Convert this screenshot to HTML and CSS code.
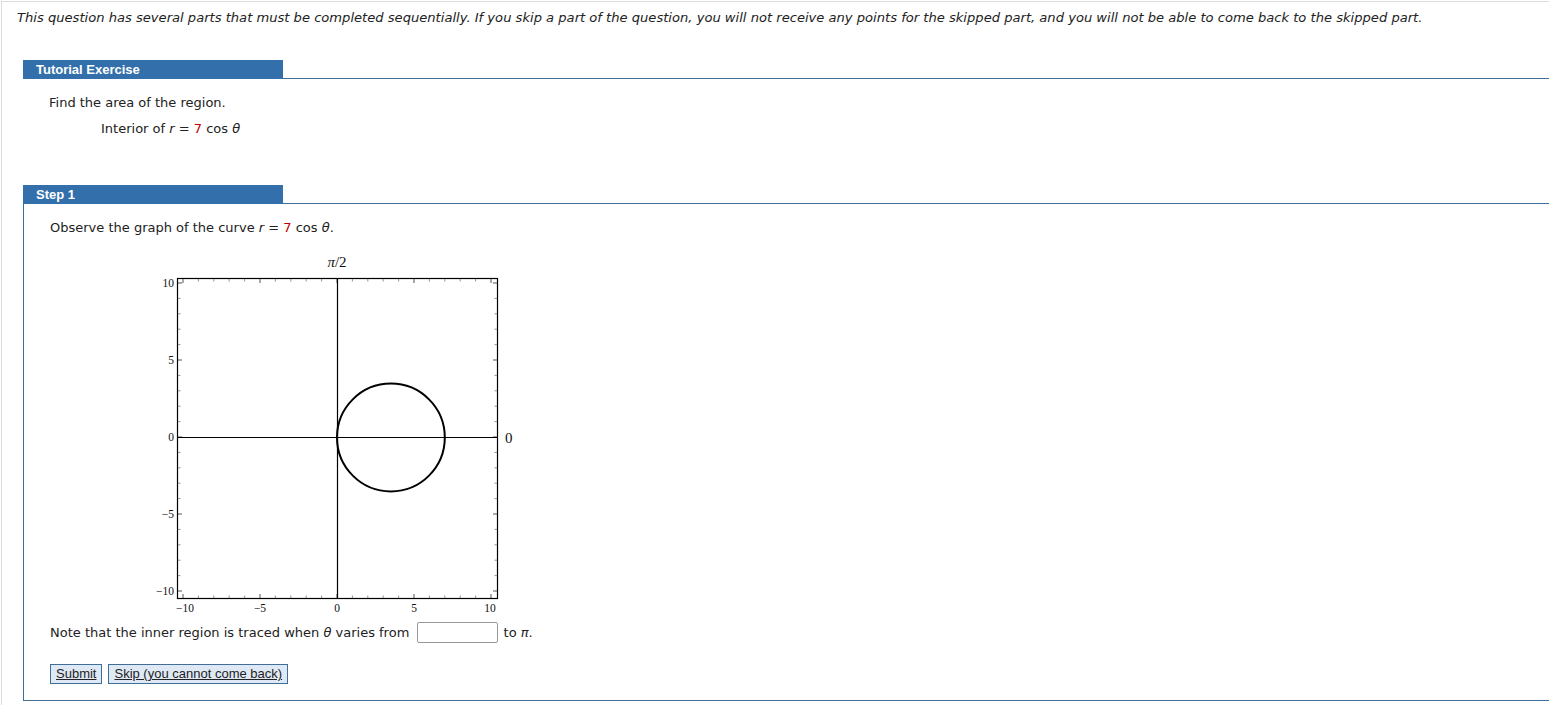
FILE: index.html
```html
<!DOCTYPE html>
<html>
<head>
<meta charset="utf-8">
<link rel="stylesheet" href="styles.css">
</head>
<body>
<div class="page">
  <p class="notice">This question has several parts that must be completed sequentially. If you skip a part of the question, you will not receive any points for the skipped part, and you will not be able to come back to the skipped part.</p>

  <section class="tutorial">
    <div class="tabrow"><div class="tab">Tutorial Exercise</div><div class="tabline"></div></div>
    <div class="tut-body">
      <p class="line">Find the area of the region.</p>
      <p class="line indent">Interior of <i class="var">r</i> = <span class="red">7</span> cos <i class="var">θ</i></p>
    </div>
  </section>

  <section class="step">
    <div class="tabrow"><div class="tab">Step 1</div><div class="tabline"></div></div>
    <div class="step-body">
      <p class="line">Observe the graph of the curve <i class="var">r</i> = <span class="red">7</span> cos <i class="var">θ</i>.</p>
      <div class="plot">
        <svg width="370" height="376" viewBox="0 -6 370 376" xmlns="http://www.w3.org/2000/svg">
          <text x="187" y="17" class="lbl-big" text-anchor="middle"><tspan font-style="italic">π</tspan>/2</text>
          <rect x="27.5" y="28.5" width="320" height="320" fill="none" stroke="#000" stroke-width="1.2"/>
          <path d="M33 348v-4M110 348v-4M187 348v-4M264 348v-4M341 348v-4M33 29v4M110 29v4M187 29v4M264 29v4M341 29v4M28 33h4M28 110h4M28 187h4M28 264h4M28 341h4M347 33h-4M347 110h-4M347 187h-4M347 264h-4M347 341h-4" stroke="#555" stroke-width="1" fill="none"/>
          <path d="M48.4 348v-2.5M63.8 348v-2.5M79.2 348v-2.5M94.6 348v-2.5M125.4 348v-2.5M140.8 348v-2.5M156.2 348v-2.5M171.6 348v-2.5M202.4 348v-2.5M217.8 348v-2.5M233.2 348v-2.5M248.6 348v-2.5M279.4 348v-2.5M294.8 348v-2.5M310.2 348v-2.5M325.6 348v-2.5M48.4 29v2.5M63.8 29v2.5M79.2 29v2.5M94.6 29v2.5M125.4 29v2.5M140.8 29v2.5M156.2 29v2.5M171.6 29v2.5M202.4 29v2.5M217.8 29v2.5M233.2 29v2.5M248.6 29v2.5M279.4 29v2.5M294.8 29v2.5M310.2 29v2.5M325.6 29v2.5M28 48.4h2.5M28 63.8h2.5M28 79.2h2.5M28 94.6h2.5M28 125.4h2.5M28 140.8h2.5M28 156.2h2.5M28 171.6h2.5M28 202.4h2.5M28 217.8h2.5M28 233.2h2.5M28 248.6h2.5M28 279.4h2.5M28 294.8h2.5M28 310.2h2.5M28 325.6h2.5M347 48.4h-2.5M347 63.8h-2.5M347 79.2h-2.5M347 94.6h-2.5M347 125.4h-2.5M347 140.8h-2.5M347 156.2h-2.5M347 171.6h-2.5M347 202.4h-2.5M347 217.8h-2.5M347 233.2h-2.5M347 248.6h-2.5M347 279.4h-2.5M347 294.8h-2.5M347 310.2h-2.5M347 325.6h-2.5" stroke="#777" stroke-width="0.8" fill="none"/>
          <line x1="187.5" y1="28" x2="187.5" y2="348" stroke="#000" stroke-width="1.2"/>
          <line x1="27" y1="187.5" x2="347" y2="187.5" stroke="#000" stroke-width="1.2"/>
          <circle cx="240.9" cy="187.5" r="53.9" fill="none" stroke="#000" stroke-width="2"/>
          <text x="24" y="37" class="lbl" text-anchor="end">10</text>
          <text x="24" y="114" class="lbl" text-anchor="end">5</text>
          <text x="24" y="191" class="lbl" text-anchor="end">0</text>
          <text x="24" y="268" class="lbl" text-anchor="end">−5</text>
          <text x="24" y="345" class="lbl" text-anchor="end">−10</text>
          <text x="35" y="362" class="lbl" text-anchor="middle">−10</text>
          <text x="110" y="362" class="lbl" text-anchor="middle">−5</text>
          <text x="187" y="362" class="lbl" text-anchor="middle">0</text>
          <text x="264" y="362" class="lbl" text-anchor="middle">5</text>
          <text x="340" y="362" class="lbl" text-anchor="middle">10</text>
          <text x="355" y="193" class="lbl-big">0</text>
        </svg>
      </div>
      <p class="line note">Note that the inner region is traced when <i class="var">θ</i> varies from <input class="answer" type="text"> to <i class="var">π</i>.</p>
      <div class="buttons">
        <button class="btn" type="button">Submit</button>
        <button class="btn" type="button">Skip (you cannot come back)</button>
      </div>
    </div>
  </section>
</div>
</body>
</html>
```
FILE: styles.css
```css
html, body {
  margin: 0;
  padding: 0;
  background: #fff;
}
body {
  font-family: "DejaVu Sans", Verdana, sans-serif;
  font-size: 13px;
  color: #222;
}
.page {
  margin: 1px 0 0 1px;
  border-top: 1px solid #ddd;
  border-left: 1px solid #ddd;
  padding: 0 0 4px 21px;
}
.notice {
  margin: 0 0 0 -6px;
  padding: 7px 0 0 0;
  font-style: italic;
  font-size: 13.1px;
  line-height: 17px;
  color: #222;
}
.tabrow {
  display: flex;
  align-items: flex-end;
}
.tab {
  width: 247px;
  height: 19px;
  background: #3370ab;
  color: #fff;
  font-family: "Liberation Sans", Arial, sans-serif;
  font-weight: bold;
  font-size: 13px;
  line-height: 19px;
  padding-left: 13px;
}
.tabline {
  flex: 1;
  border-bottom: 1px solid #3f6e98;
}
.tutorial {
  margin-top: 34px;
}
.tut-body {
  padding: 15px 0 0 26px;
}
.line {
  margin: 0;
  line-height: 17px;
}
.tut-body .indent {
  margin-top: 9px;
  padding-left: 52px;
}
.var {
  font-family: "DejaVu Sans", sans-serif;
  font-style: italic;
}
.red {
  color: #c00000;
}
.step {
  margin-top: 48px;
}
.step-body {
  border-left: 1px solid #3f6e98;
  border-bottom: 1px solid #3f6e98;
  padding: 15px 0 16px 26px;
}
.plot {
  margin: 8px 0 0 100px;
  height: 378px;
}
.plot svg {
  display: block;
}
.lbl {
  font-family: "Liberation Serif", "Times New Roman", serif;
  font-size: 11.5px;
  fill: #111;
}
.lbl-big {
  font-family: "Liberation Serif", "Times New Roman", serif;
  font-size: 15px;
  fill: #111;
}
.note {
  display: flex;
  align-items: center;
  white-space: pre;
}
.answer {
  width: 79px;
  height: 19px;
  margin: 0 1px 0 4px;
  padding: 0;
  border: 1px solid #999;
  border-radius: 2px;
  box-sizing: content-box;
}
.buttons {
  margin-top: 21px;
  display: flex;
  gap: 6px;
}
.btn {
  font-family: "Liberation Sans", Arial, sans-serif;
  font-size: 13px;
  color: #222;
  text-decoration: underline;
  background: #dfe9f5;
  border: 1px solid #3f6e98;
  border-radius: 0;
  padding: 1px 5px 2px;
  line-height: 15px;
  margin: 0;
}
```
